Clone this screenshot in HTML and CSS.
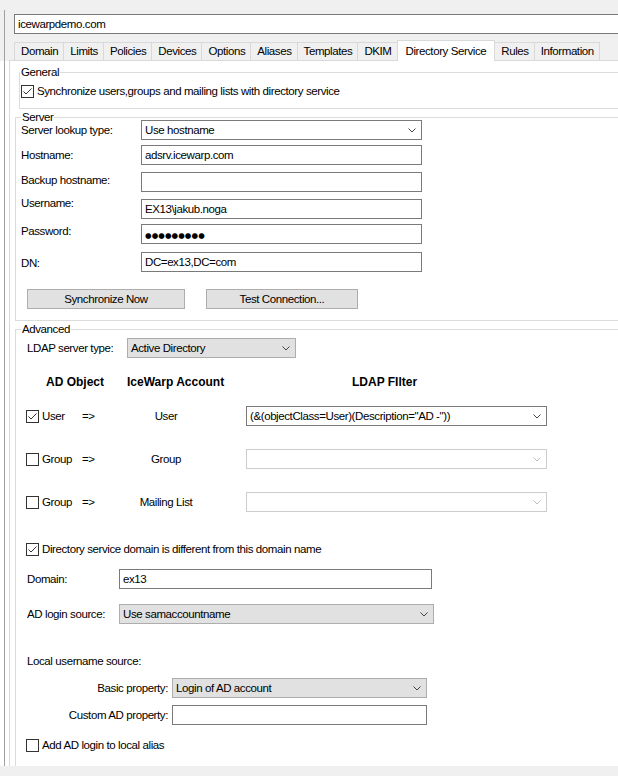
FILE: index.html
```html
<!DOCTYPE html>
<html lang="en">
<head>
    <meta charset="UTF-8">
    <meta name="viewport" content="width=device-width, initial-scale=1.0">
    <title>icewarpdemo.com - Directory Service</title>
    <link rel="stylesheet" href="styles.css">
</head>
<body>

<div class="app">
    <div class="head">
        <div class="edit domain-name">icewarpdemo.com</div>
        <div class="tabs">
            <div class="tab">Domain</div>
            <div class="tab">Limits</div>
            <div class="tab">Policies</div>
            <div class="tab">Devices</div>
            <div class="tab">Options</div>
            <div class="tab">Aliases</div>
            <div class="tab">Templates</div>
            <div class="tab">DKIM</div>
            <div class="tab active">Directory Service</div>
            <div class="tab">Rules</div>
            <div class="tab">Information</div>
        </div>
    </div>

    <div class="panel">
        <!-- General -->
        <div class="group general">
            <div class="group-title">General</div>
            <div class="check-row">
                <span class="check on"><svg viewBox="0 0 11 11"><polyline points="1.5,5.5 4,8 9.5,2.5"/></svg></span>
                Synchronize users,groups and mailing lists with directory service
            </div>
        </div>

        <!-- Server -->
        <div class="group server">
            <div class="group-title">Server</div>
            <div class="row">
                <span class="label">Server lookup type:</span>
                <div class="combo">Use hostname <svg viewBox="0 0 8 5"><polyline points="0.5,0.5 4,4 7.5,0.5"/></svg></div>
            </div>
            <div class="row mt5">
                <span class="label">Hostname:</span>
                <div class="edit">adsrv.icewarp.com</div>
            </div>
            <div class="row mt7">
                <span class="label up2">Backup hostname:</span>
                <div class="edit"></div>
            </div>
            <div class="row mt7">
                <span class="label up6">Username:</span>
                <div class="edit">EX13\jakub.noga</div>
            </div>
            <div class="row mt5">
                <span class="label up3">Password:</span>
                <div class="edit"><span class="dots">●●●●●●●●●</span></div>
            </div>
            <div class="row mt8">
                <span class="label down1">DN:</span>
                <div class="edit">DC=ex13,DC=com</div>
            </div>
            <div class="buttons">
                <button class="btn sync">Synchronize Now</button>
                <button class="btn test">Test Connection...</button>
            </div>
        </div>

        <!-- Advanced -->
        <div class="group advanced">
            <div class="group-title">Advanced</div>
            <div class="row">
                <span class="label ldap-label">LDAP server type:</span>
                <div class="combo gray ldap-type">Active Directory <svg viewBox="0 0 8 5"><polyline points="0.5,0.5 4,4 7.5,0.5"/></svg></div>
            </div>

            <div class="map map-head">
                <span class="h-obj">AD Object</span>
                <span></span>
                <span class="h-acc">IceWarp Account</span>
                <span class="h-filter">LDAP FIlter</span>
            </div>

            <div class="map">
                <div class="check-row"><span class="check on"><svg viewBox="0 0 11 11"><polyline points="1.5,5.5 4,8 9.5,2.5"/></svg></span>User</div>
                <span class="arrow">=&gt;</span>
                <span class="acc">User</span>
                <div class="combo filter">(&amp;(objectClass=User)(Description="AD -")) <svg viewBox="0 0 8 5"><polyline points="0.5,0.5 4,4 7.5,0.5"/></svg></div>

                <div class="check-row"><span class="check"></span>Group</div>
                <span class="arrow">=&gt;</span>
                <span class="acc">Group</span>
                <div class="combo filter off"><svg viewBox="0 0 8 5"><polyline points="0.5,0.5 4,4 7.5,0.5"/></svg></div>

                <div class="check-row"><span class="check"></span>Group</div>
                <span class="arrow">=&gt;</span>
                <span class="acc">Mailing List</span>
                <div class="combo filter off"><svg viewBox="0 0 8 5"><polyline points="0.5,0.5 4,4 7.5,0.5"/></svg></div>
            </div>

            <div class="check-row dir-domain">
                <span class="check on"><svg viewBox="0 0 11 11"><polyline points="1.5,5.5 4,8 9.5,2.5"/></svg></span>
                Directory service domain is different from this domain name
            </div>

            <div class="row mt13">
                <span class="label short">Domain:</span>
                <div class="edit ad-domain">ex13</div>
            </div>
            <div class="row mt15">
                <span class="label short">AD login source:</span>
                <div class="combo gray login-src">Use samaccountname <svg viewBox="0 0 8 5"><polyline points="0.5,0.5 4,4 7.5,0.5"/></svg></div>
            </div>

            <div class="local-title">Local username source:</div>
            <div class="row mt10">
                <span class="label prop">Basic property:</span>
                <div class="combo gray prop-box">Login of AD account <svg viewBox="0 0 8 5"><polyline points="0.5,0.5 4,4 7.5,0.5"/></svg></div>
            </div>
            <div class="row mt7">
                <span class="label prop">Custom AD property:</span>
                <div class="edit prop-box"></div>
            </div>

            <div class="check-row alias">
                <span class="check"></span>
                Add AD login to local alias
            </div>
        </div>
    </div>
</div>

</body>
</html>
```

FILE: styles.css
```css
body {
    margin: 0;
    font: 11.5px/14px "Liberation Sans", Arial, sans-serif;
    letter-spacing: -0.4px;
    color: #000;
    background: linear-gradient(#f0f0f0 61px, #fff 61px);
    overflow: hidden;
}
.app {
    margin: 10px 0 0 4px;
    height: 756px;
    border-left: 1px solid #a0a0a0;
    overflow: hidden;
}
.head {
    padding: 4px 0 0 9px;
}
.domain-name {
    margin-right: -2px;
}
.tabs {
    display: flex;
    align-items: flex-end;
    height: 20px;
    margin-top: 6px;
}
.tab {
    height: 18px;
    box-sizing: border-box;
    padding: 0 5px 0 6px;
    margin-right: -1px;
    border: 1px solid #d9d9d9;
    border-bottom: 0;
    background: #f0f0f0;
    line-height: 17px;
    white-space: nowrap;
}
.tab.active {
    position: relative;
    z-index: 1;
    height: 21px;
    margin-bottom: -1px;
    padding: 0 8px;
    background: #fff;
    line-height: 20px;
}
.panel {
    margin-left: 4px;
    padding-left: 5px;
    border-left: 1px solid #d9d9d9;
    border-top: 1px solid #d9d9d9;
    background: #fff;
    height: 800px;
}

/* group boxes */
.group {
    position: relative;
    border: 1px solid #dcdcdc;
    border-right: 0;
}
.group-title {
    position: absolute;
    top: -8px;
    left: 5px;
    padding: 0 1px;
    background: #fff;
}
.general {
    margin: 11px 0 0 4px;
    padding: 11px 0 10px 1px;
}
.general .group-title {
    left: 0;
}
.server {
    margin-top: 8px;
    padding: 2px 0 11px 5px;
}
.advanced {
    margin-top: 8px;
    padding: 8px 0 60px 11px;
}

/* rows and controls */
.row {
    display: flex;
    align-items: center;
    height: 20px;
}
.mt5 { margin-top: 5px; }
.mt7 { margin-top: 7px; }
.mt8 { margin-top: 8px; }
.mt10 { margin-top: 10px; }
.mt13 { margin-top: 13px; }
.mt15 { margin-top: 15px; }
.label {
    flex: none;
    width: 120px;
    white-space: nowrap;
}
.label.up2 { margin-bottom: 4px; }
.label.up3 { margin-bottom: 6px; }
.label.up6 { margin-bottom: 12px; }
.label.down1 { margin-top: 2px; }
.edit, .combo {
    height: 20px;
    box-sizing: border-box;
    border: 1px solid #7a7a7a;
    background: #fff;
    padding: 0 3px;
    line-height: 18px;
    white-space: nowrap;
}
.combo {
    display: flex;
    align-items: center;
    justify-content: space-between;
}
.combo svg {
    width: 8px;
    height: 5px;
    margin-right: 2px;
    fill: none;
    stroke: #444;
    stroke-width: 1;
}
.combo.gray {
    background: #e1e1e1;
    border-color: #adadad;
}
.combo.off {
    border-color: #cccccc;
    justify-content: flex-end;
}
.combo.off svg {
    stroke: #bcbcbc;
}
.server .edit, .server .combo {
    width: 281px;
}
.dots {
    font-family: "DejaVu Sans", sans-serif;
    font-size: 7.5px;
    letter-spacing: 0.1px;
}
.buttons {
    display: flex;
    gap: 21px;
    margin: 17px 0 0 6px;
}
.btn {
    height: 20px;
    padding: 0;
    border: 1px solid #adadad;
    background: #e1e1e1;
    font: inherit;
    letter-spacing: inherit;
    color: #000;
}
.btn.sync { width: 158px; }
.btn.test { width: 152px; }

/* checkboxes */
.check-row {
    display: flex;
    align-items: center;
    gap: 3px;
    height: 14px;
    white-space: nowrap;
}
.check {
    flex: none;
    display: flex;
    width: 13px;
    height: 13px;
    box-sizing: border-box;
    border: 1px solid #333;
    background: #fff;
}
.check svg {
    width: 11px;
    height: 11px;
    fill: none;
    stroke: #333;
    stroke-width: 1;
}

/* advanced */
.ldap-label { width: 100px; }
.ldap-type { width: 169px; }
.map {
    display: grid;
    grid-template-columns: 54px 47px 78px 342px;
    row-gap: 23px;
    align-items: center;
    margin: 17px 0 0 -1px;
}
.map > * {
    min-height: 20px;
}
.map .check-row {
    height: 20px;
}
.map-head {
    font-weight: bold;
    font-size: 12px;
    letter-spacing: 0;
}
.map-head > * {
    min-height: 14px;
    white-space: nowrap;
}
.h-obj { padding-left: 20px; }
.h-filter { padding-left: 147px; }
.arrow {
    padding-left: 2px;
    line-height: 20px;
}
.acc {
    text-align: center;
    line-height: 20px;
    white-space: nowrap;
}
.filter {
    margin-left: 41px;
    width: 301px;
}
.dir-domain {
    margin: 30px 0 0 -1px;
}
.short { width: 92px; }
.ad-domain { width: 313px; }
.login-src { width: 315px; }
.local-title {
    margin-top: 30px;
}
.prop {
    width: 145px;
    padding-right: 4px;
    box-sizing: border-box;
    text-align: right;
}
.prop-box { width: 255px; }
.alias {
    margin: 13px 0 0 -1px;
}
```
